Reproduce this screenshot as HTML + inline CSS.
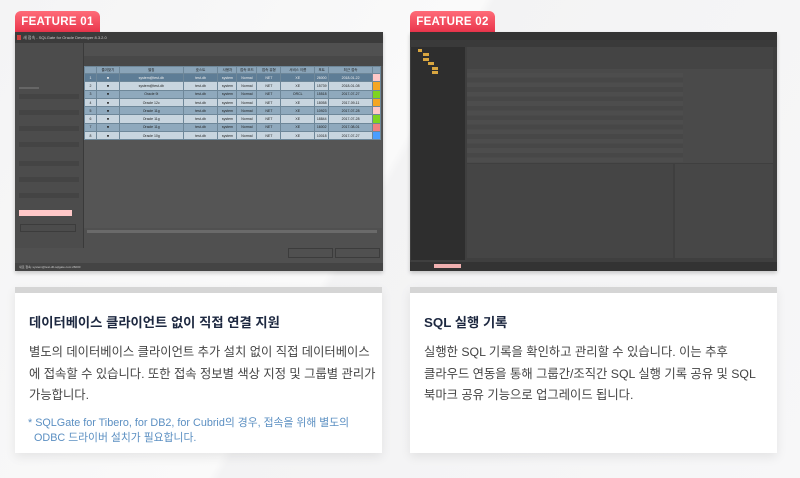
<!DOCTYPE html>
<html><head><meta charset="utf-8"><style>
*{margin:0;padding:0;box-sizing:border-box}
body{width:800px;height:478px;overflow:hidden;background:linear-gradient(120deg,#f4f4f5 0%,#fafafa 45%,#f3f3f4 46%,#f7f7f8 100%);font-family:"Liberation Sans","Noto Sans CJK KR",sans-serif;position:relative}
.a{position:absolute}
.badge{position:absolute;height:22px;width:85px;background:linear-gradient(#ff6b78,#e8334a);border-radius:6px 6px 0 0;color:#fff;font-weight:bold;font-size:11.5px;letter-spacing:.3px;line-height:22px;text-align:center}
.card{position:absolute;top:287px;height:166px;background:#fff;border-top:6px solid #d5d5d5;box-shadow:0 4px 10px rgba(0,0,0,.08)}
.card h3{position:absolute;top:19px;font-size:13.3px;color:#1d2840;font-weight:bold}
.card p{position:absolute;top:49px;font-size:12.3px;line-height:21.5px;color:#444}
.note{position:absolute;font-size:10.8px;line-height:14.5px;color:#5b8fc2}
table{border-collapse:collapse;font-size:3.5px;color:#222}
td{height:8.3px;border:1px solid #6e8799;text-align:center;white-space:nowrap;overflow:hidden}
.s{font-size:3px;color:#ccc}
</style></head><body>

<div class="badge" style="left:15px;top:11px">FEATURE 01</div>
<div class="badge" style="left:410px;top:11px">FEATURE 02</div>

<!-- screenshot 1 -->
<div class="a" style="left:15px;top:32px;width:368px;height:239px;background:#505050;box-shadow:0 2px 4px rgba(0,0,0,.2);overflow:hidden">
 <div class="a" style="left:0;top:0;width:368px;height:11px;background:#3b3b3b"></div>
 <div class="a s" style="left:8px;top:3px;font-size:4px">새 접속 - SQLGate for Oracle Developer 8.3.2.0</div>
 <div class="a" style="left:2px;top:3px;width:4px;height:5px;background:#d04040"></div>
 <div class="a" style="left:0;top:11px;width:69px;height:205px;background:#4c4c4c;border-right:1px solid #3a3a3a"></div>
 <div class="a" style="left:4px;top:55px;width:20px;height:2px;background:#666"></div>
 <div class="a" style="left:4px;top:62px;width:60px;height:5px;background:#444"></div>
 <div class="a" style="left:4px;top:78px;width:60px;height:5px;background:#444"></div>
 <div class="a" style="left:4px;top:94px;width:60px;height:5px;background:#444"></div>
 <div class="a" style="left:4px;top:110px;width:60px;height:5px;background:#444"></div>
 <div class="a" style="left:4px;top:129px;width:60px;height:5px;background:#444"></div>
 <div class="a" style="left:4px;top:145px;width:60px;height:5px;background:#444"></div>
 <div class="a" style="left:4px;top:161px;width:60px;height:5px;background:#444"></div>
 <div class="a" style="left:4px;top:178px;width:53px;height:6px;background:#ffc8c8"></div>
 <div class="a" style="left:5px;top:192px;width:56px;height:8px;border:1px solid #3c3c3c"></div>
 <div class="a" style="left:69px;top:24px;width:299px;height:10px;background:#484848"></div>
 <div class="a" style="left:69px;top:34px;width:298px;height:162px;background:#555"></div>
 <div class="a" style="left:72px;top:198px;width:290px;height:3px;background:#6a6a6a"></div>
 <div class="a" style="left:273px;top:216px;width:45px;height:10px;border:1px solid #3c3c3c"></div>
 <div class="a" style="left:320px;top:216px;width:45px;height:10px;border:1px solid #3c3c3c"></div>
 <div class="a" style="left:0;top:231px;width:368px;height:8px;background:#444"></div>
 <div class="a s" style="left:4px;top:233px">새로 접속: system@test-db.sqlgate.com:26000</div>
 <table class="a" style="left:69px;top:34px;width:297px">
  <tr style="background:#8aa4b8;height:7px"><td style="width:12px;height:7px"></td><td style="width:23px;height:7px">즐겨찾기</td><td style="width:64px;height:7px">별칭</td><td style="width:35px;height:7px">호스트</td><td style="width:19px;height:7px">사용자</td><td style="width:20px;height:7px">접속 모드</td><td style="width:24px;height:7px">접속 유형</td><td style="width:34px;height:7px">서비스 이름</td><td style="width:14px;height:7px">포트</td><td style="width:44px;height:7px">최근 접속</td><td style="width:8px;height:7px"></td></tr>
  <tr style="background:#5e7d96;color:#eee"><td>1</td><td>■</td><td>system@test-db</td><td>test-db</td><td>system</td><td>Normal</td><td>NET</td><td>XE</td><td>26000</td><td>2018-01-22</td><td style="background:#ffc8c8"></td></tr>
  <tr style="background:#c8d5df"><td>2</td><td>■</td><td>system@test-db</td><td>test-db</td><td>system</td><td>Normal</td><td>NET</td><td>XE</td><td>15739</td><td>2018-01-08</td><td style="background:#f5a623"></td></tr>
  <tr style="background:#8fa9bd"><td>3</td><td>■</td><td>Oracle 9i</td><td>test-db</td><td>system</td><td>Normal</td><td>NET</td><td>ORCL</td><td>15518</td><td>2017-07-27</td><td style="background:#7ed321"></td></tr>
  <tr style="background:#c8d5df"><td>4</td><td>■</td><td>Oracle 12c</td><td>test-db</td><td>system</td><td>Normal</td><td>NET</td><td>XE</td><td>18058</td><td>2017-09-11</td><td style="background:#f5a623"></td></tr>
  <tr style="background:#8fa9bd"><td>5</td><td>■</td><td>Oracle 11g</td><td>test-db</td><td>system</td><td>Normal</td><td>NET</td><td>XE</td><td>10923</td><td>2017-07-28</td><td style="background:#ffc8c8"></td></tr>
  <tr style="background:#c8d5df"><td>6</td><td>■</td><td>Oracle 11g</td><td>test-db</td><td>system</td><td>Normal</td><td>NET</td><td>XE</td><td>18844</td><td>2017-07-28</td><td style="background:#7ed321"></td></tr>
  <tr style="background:#8fa9bd"><td>7</td><td>■</td><td>Oracle 11g</td><td>test-db</td><td>system</td><td>Normal</td><td>NET</td><td>XE</td><td>16002</td><td>2017-08-01</td><td style="background:#f08080"></td></tr>
  <tr style="background:#c8d5df"><td>8</td><td>■</td><td>Oracle 10g</td><td>test-db</td><td>system</td><td>Normal</td><td>NET</td><td>XE</td><td>10018</td><td>2017-07-27</td><td style="background:#4a9eff"></td></tr>
 </table>
</div>

<!-- screenshot 2 -->
<div class="a" style="left:410px;top:32px;width:367px;height:239px;background:#3f3f3f;box-shadow:0 2px 4px rgba(0,0,0,.2);overflow:hidden">
 <div class="a" style="left:0;top:0;width:367px;height:8px;background:#333"></div>
 <div class="a" style="left:0;top:8px;width:367px;height:7px;background:#3a3a3a"></div>
 <div class="a" style="left:1px;top:15px;width:54px;height:213px;background:#2e2e2e"></div>
 <div class="a" style="left:8px;top:17px;width:4px;height:3px;background:#d9a640"></div>
 <div class="a" style="left:13px;top:21px;width:6px;height:3px;background:#d9a640"></div>
 <div class="a" style="left:13px;top:26px;width:6px;height:3px;background:#d9a640"></div>
 <div class="a" style="left:18px;top:30px;width:6px;height:3px;background:#d9a640"></div>
 <div class="a" style="left:22px;top:35px;width:6px;height:3px;background:#d9a640"></div>
 <div class="a" style="left:22px;top:39px;width:6px;height:3px;background:#d9a640"></div>
 <div class="a" style="left:57px;top:15px;width:306px;height:22px;background:#444"></div>
 <div class="a" style="left:57px;top:37px;width:306px;height:94px;background:#4a4a4a"></div>
 <div class="a" style="left:57px;top:41px;width:216px;height:90px;background:repeating-linear-gradient(#4d4d4d 0 4.7px,#474747 4.7px 9.4px)"></div>
 <div class="a" style="left:57px;top:132px;width:206px;height:94px;background:#454545"></div>
 <div class="a" style="left:265px;top:132px;width:98px;height:94px;background:#474747"></div>
 <div class="a" style="left:0;top:230px;width:367px;height:9px;background:#333"></div>
 <div class="a" style="left:24px;top:232px;width:27px;height:4px;background:#f0b0b0"></div>
</div>

<div class="card" style="left:15px;width:367px">
 <h3 style="left:14px">데이터베이스 클라이언트 없이 직접 연결 지원</h3>
 <p style="left:14px;width:350px">별도의 데이터베이스 클라이언트 추가 설치 없이 직접 데이터베이스에 접속할 수 있습니다. 또한 접속 정보별 색상 지정 및 그룹별 관리가 가능합니다.</p>
 <div class="note" style="left:13px;top:123px;width:350px">* SQLGate for Tibero, for DB2, for Cubrid의 경우, 접속을 위해 별도의<br>&nbsp;&nbsp;ODBC 드라이버 설치가 필요합니다.</div>
</div>
<div class="card" style="left:410px;width:367px">
 <h3 style="left:14px">SQL 실행 기록</h3>
 <p style="left:14px;width:340px">실행한 SQL 기록을 확인하고 관리할 수 있습니다. 이는 추후<br>클라우드 연동을 통해 그룹간/조직간 SQL 실행 기록 공유 및 SQL<br>북마크 공유 기능으로 업그레이드 됩니다.</p>
</div>
</body></html>
